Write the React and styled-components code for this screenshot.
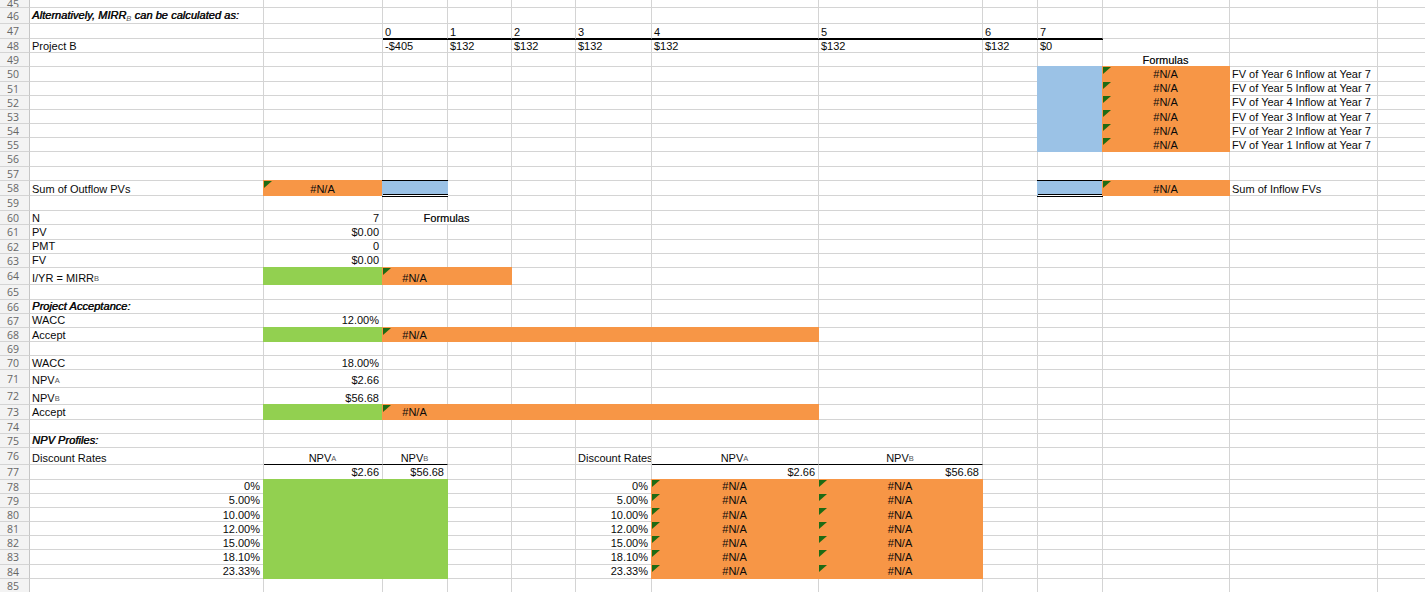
import React from 'react';
import styled, { createGlobalStyle } from 'styled-components';

const GlobalStyle = createGlobalStyle`
  html, body {
    margin: 0;
    background: #fff;
    overflow: hidden;
  }
`;

const ORANGE = '#f79646';
const BLUE = '#9bc2e6';
const GREEN = '#92d050';
const LINE = '#d4d4d4';

const COLUMNS = ['A', 'B', 'C', 'D', 'E', 'F', 'G', 'H', 'I', 'J', 'K', 'L', 'M'];
const FIRST_ROW = 45;
const ROW_HEIGHTS = [
  8, 16, 15, 14, 14, 15, 14, 14, 14, 14, 14, 15, 14, 15, 15, 14, 15, 14, 14, 17, 15,
  14, 14, 14, 14, 14, 18, 17, 15, 14, 14, 17, 15, 14, 14, 14, 14, 14, 15, 14, 14,
];

// the rows whose text sits lower in its cell than the plain bottom alignment
const TEXT_DROP = {
  46: 2, 47: 1, 48: 1, 49: 1, 53: 1, 54: 1, 55: 1, 58: 1, 60: 1, 64: 1,
  68: 1, 70: 1, 72: 1, 76: 1, 80: 1, 81: 1, 82: 1,
};

const Sheet = styled.div`
  display: grid;
  grid-template-columns: 30px 234px 119px 65px 64px 64px 76px 167px 164px 55px 65px 127px 148px 48px;
  grid-template-rows: ${ROW_HEIGHTS.map((h) => `${h}px`).join(' ')};
  width: 1425px;
  height: 592px;
  overflow: hidden;
  font-family: 'Liberation Sans', Arial, sans-serif;
  font-size: 11px;
  color: #0a0a0a;
`;

const RowHead = styled.div`
  display: flex;
  align-items: center;
  justify-content: center;
  box-sizing: border-box;
  padding-right: 3px;
  overflow: hidden;
  background: #f3f3f3;
  border-right: 1px solid #c6c6c6;
  border-bottom: 1px solid ${LINE};
  font-family: 'Open Sans', sans-serif;
  font-size: 10.5px;
  color: #666;
`;

const Cell = styled.div`
  position: relative;
  display: flex;
  align-items: flex-end;
  justify-content: ${(p) => p.$align || 'flex-start'};
  box-sizing: border-box;
  min-width: 0;
  padding: 0 3px 0 2px;
  line-height: ${(p) => 13 - 2 * (p.$drop || 0)}px;
  white-space: nowrap;
  overflow-x: clip;
  border-right: 1px solid ${LINE};
  border-bottom: 1px solid ${(p) => (p.$under ? '#000' : LINE)};
  grid-column: span ${(p) => p.$span || 1};
  ${(p) => p.$heavy && 'overflow-x: visible; box-shadow: 0 1px 0 #000; z-index: 2;'}
`;

// the shadow paints over the grid lines above and to the left of a filled cell
const FillCell = styled(Cell)`
  background: ${(p) => p.$fill};
  border-color: transparent;
  box-shadow: -1px -1px 0 ${(p) => p.$fill}, 0 -1px 0 ${(p) => p.$fill}, -1px 0 0 ${(p) => p.$fill};
  overflow-x: visible;
  z-index: 1;
`;

// blue total box: thin line on top, double line below
const TotalCell = styled.div`
  position: relative;
  background: ${BLUE};
  box-shadow:
    inset 0 -1px 0 #fff,
    inset 0 -2px 0 #000,
    0 1px 0 #000,
    0 -1px 0 #000,
    -1px 0 0 ${BLUE},
    -1px -1px 0 #000,
    -1px 1px 0 #000;
  z-index: 1;
`;

const Flag = styled.span`
  position: absolute;
  top: 0;
  left: 0;
  width: 0;
  height: 0;
  border-top: 7px solid #1e6b14;
  border-right: 8px solid transparent;
`;

const Heading = styled.span`
  font-style: italic;
  letter-spacing: 0.05px;
  text-shadow: 0.5px 0 0 #0a0a0a;
`;

const Struck = styled.span`
  text-shadow: 0.2px 0 0 rgba(0, 0, 0, 0.5);
`;

const Sub = styled.span`
  font-size: 7.5px;
  color: #555;
  text-shadow: none;
  vertical-align: -2px;
`;

const CENTER = 'center';
const na = () => ({ fill: ORANGE, flag: true, text: '#N/A', align: CENTER });
const left = (text) => ({ text });
const right = (text) => ({ text, align: 'flex-end' });
const green = { fill: GREEN };
const orange = { fill: ORANGE };
const heavy = (text) => ({ text, heavy: true });
const total = { total: true };

const inflowRow = (year) => ({
  J: { fill: BLUE },
  K: na(),
  L: left(`FV of Year ${year} Inflow at Year 7`),
});

const profileRow = (rate) => ({
  A: right(rate),
  B: green,
  C: green,
  F: right(rate),
  G: na(),
  H: na(),
});

const npv = (letter) => (
  <>
    NPV<Sub>{letter}</Sub>
  </>
);

const acceptRow = {
  A: left('Accept'),
  B: green,
  C: na(),
  D: orange,
  E: orange,
  F: orange,
  G: orange,
};

const DATA = {
  46: {
    A: left(
      <Heading>
        Alternatively, MIRR<Sub>B</Sub> can be calculated as:
      </Heading>
    ),
  },
  47: {
    C: heavy('0'),
    D: heavy('1'),
    E: heavy('2'),
    F: heavy('3'),
    G: heavy('4'),
    H: heavy('5'),
    I: heavy('6'),
    J: heavy('7'),
  },
  48: {
    A: left('Project B'),
    C: left('-$405'),
    D: left('$132'),
    E: left('$132'),
    F: left('$132'),
    G: left('$132'),
    H: left('$132'),
    I: left('$132'),
    J: left('$0'),
  },
  49: { K: { text: <Struck>Formulas</Struck>, align: CENTER } },
  50: inflowRow(6),
  51: inflowRow(5),
  52: inflowRow(4),
  53: inflowRow(3),
  54: inflowRow(2),
  55: inflowRow(1),
  58: {
    A: left('Sum of Outflow PVs'),
    B: na(),
    C: total,
    J: total,
    K: na(),
    L: left('Sum of Inflow FVs'),
  },
  60: { A: left('N'), B: right('7'), C: { text: <Struck>Formulas</Struck>, align: CENTER, span: 2 } },
  61: { A: left('PV'), B: right('$0.00') },
  62: { A: left('PMT'), B: right('0') },
  63: { A: left('FV'), B: right('$0.00') },
  64: {
    A: left(
      <>
        I/YR = MIRR<Sub>B</Sub>
      </>
    ),
    B: green,
    C: na(),
    D: orange,
  },
  66: { A: left(<Heading>Project Acceptance:</Heading>) },
  67: { A: left('WACC'), B: right('12.00%') },
  68: acceptRow,
  70: { A: left('WACC'), B: right('18.00%') },
  71: { A: left(npv('A')), B: right('$2.66') },
  72: { A: left(npv('B')), B: right('$56.68') },
  73: acceptRow,
  75: { A: left(<Heading>NPV Profiles:</Heading>) },
  76: {
    A: left('Discount Rates'),
    B: { text: npv('A'), align: CENTER, under: true },
    C: { text: npv('B'), align: CENTER, under: true },
    F: left('Discount Rates'),
    G: { text: npv('A'), align: CENTER, under: true },
    H: { text: npv('B'), align: CENTER, under: true },
  },
  77: { B: right('$2.66'), C: right('$56.68'), G: right('$2.66'), H: right('$56.68') },
  78: profileRow('0%'),
  79: profileRow('5.00%'),
  80: profileRow('10.00%'),
  81: profileRow('12.00%'),
  82: profileRow('15.00%'),
  83: profileRow('18.10%'),
  84: profileRow('23.33%'),
};

const renderCell = (row, col, cell) => {
  const key = `${col}${row}`;
  const drop = TEXT_DROP[row];
  if (cell.total) return <TotalCell key={key} />;
  if (cell.fill) {
    return (
      <FillCell key={key} $fill={cell.fill} $align={cell.align} $drop={drop}>
        {cell.flag && <Flag />}
        {cell.text}
      </FillCell>
    );
  }
  return (
    <Cell
      key={key}
      $align={cell.align}
      $span={cell.span}
      $under={cell.under || cell.heavy}
      $heavy={cell.heavy}
      $drop={drop}
    >
      {cell.text}
    </Cell>
  );
};

const renderRow = (row) => {
  const cells = DATA[row] || {};
  const out = [<RowHead key={`head${row}`}>{row}</RowHead>];
  let skip = 0;
  COLUMNS.forEach((col) => {
    if (skip > 0) {
      skip -= 1;
      return;
    }
    const cell = cells[col] || {};
    if (cell.span) skip = cell.span - 1;
    out.push(renderCell(row, col, cell));
  });
  return out;
};

export default function App() {
  return (
    <>
      <GlobalStyle />
      <Sheet>{ROW_HEIGHTS.map((_, i) => renderRow(FIRST_ROW + i))}</Sheet>
    </>
  );
}
